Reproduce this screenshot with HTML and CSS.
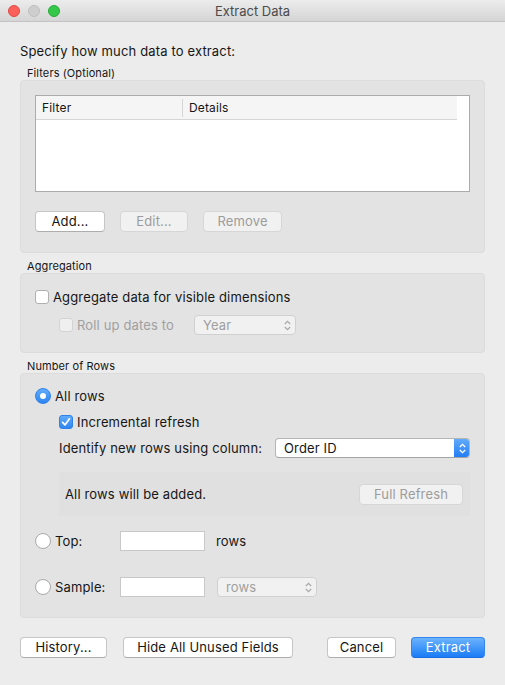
FILE: index.html
```html
<!DOCTYPE html>
<html>
<head>
<meta charset="utf-8">
<title>Extract Data</title>
<link rel="stylesheet" href="styles.css">
</head>
<body>
<div class="window">
  <div class="titlebar">
    <div class="lights">
      <span class="light red"></span>
      <span class="light gray"></span>
      <span class="light green"></span>
    </div>
    <div class="title">Extract Data</div>
    <div></div>
  </div>

  <div class="content">
    <div class="heading">Specify how much data to extract:</div>

    <div class="group-label">Filters (Optional)</div>
    <div class="group filters">
      <div class="table">
        <div class="thead">
          <div class="th th-filter">Filter</div>
          <div class="col-sep"></div>
          <div class="th th-details">Details</div>
        </div>
      </div>
      <div class="btn-row">
        <button class="btn w-add">Add...</button>
        <button class="btn disabled w-edit">Edit...</button>
        <button class="btn disabled w-remove">Remove</button>
      </div>
    </div>

    <div class="group-label">Aggregation</div>
    <div class="group agg">
      <div class="row">
        <span class="check"></span>
        <span>Aggregate data for visible dimensions</span>
      </div>
      <div class="row indent gap8">
        <span class="check disabled"></span>
        <span class="muted rollup-label">Roll up dates to</span>
        <div class="select disabled w-year">
          <span>Year</span>
          <svg class="chev" width="7" height="11" viewBox="0 0 7 11"><path d="M0.8 4 L3.5 1.3 L6.2 4 M0.8 7 L3.5 9.7 L6.2 7" fill="none" stroke="#a8a8a8" stroke-width="1.2"/></svg>
        </div>
      </div>
    </div>

    <div class="group-label">Number of Rows</div>
    <div class="group rows-group">
      <div class="row">
        <span class="radio on"><span class="dot"></span></span>
        <span>All rows</span>
      </div>
      <div class="row indent gap6">
        <span class="check on">
          <svg width="12" height="12" viewBox="0 0 12 12"><path d="M2.6 6.4 L5 8.9 L9.4 2.8" fill="none" stroke="#fff" stroke-width="1.7" stroke-linecap="round" stroke-linejoin="round"/></svg>
        </span>
        <span>Incremental refresh</span>
      </div>
      <div class="row indent gap6">
        <span class="identify-label">Identify new rows using column:</span>
        <div class="select active">
          <span>Order ID</span>
          <span class="stepper">
            <svg width="7" height="11" viewBox="0 0 7 11"><path d="M0.8 4 L3.5 1.3 L6.2 4 M0.8 7 L3.5 9.7 L6.2 7" fill="none" stroke="#fff" stroke-width="1.3"/></svg>
          </span>
        </div>
      </div>
      <div class="panel">
        <span>All rows will be added.</span>
        <button class="btn disabled w-full">Full Refresh</button>
      </div>
      <div class="row gap15">
        <span class="radio"></span>
        <span class="opt-label">Top:</span>
        <span class="field"></span>
        <span class="after">rows</span>
      </div>
      <div class="row gap26">
        <span class="radio"></span>
        <span class="opt-label">Sample:</span>
        <span class="field"></span>
        <div class="select disabled w-rows">
          <span>rows</span>
          <svg class="chev" width="7" height="11" viewBox="0 0 7 11"><path d="M0.8 4 L3.5 1.3 L6.2 4 M0.8 7 L3.5 9.7 L6.2 7" fill="none" stroke="#a8a8a8" stroke-width="1.2"/></svg>
        </div>
      </div>
    </div>

    <div class="footer">
      <div class="btn-group left">
        <button class="btn w-history">History...</button>
        <button class="btn w-hide">Hide All Unused Fields</button>
      </div>
      <div class="btn-group right">
        <button class="btn w-cancel">Cancel</button>
        <button class="btn primary w-extract">Extract</button>
      </div>
    </div>
  </div>
</div>
</body>
</html>
```

FILE: styles.css
```css
html, body {
  margin: 0;
  padding: 0;
  background: #ececec;
}

body {
  font-family: Inter, "Liberation Sans", Arial, sans-serif;
  font-size: 13px;
  letter-spacing: 0.15px;
  color: #161616;
}

.window {
  width: 505px;
  height: 685px;
  background: #ececec;
  overflow: hidden;
}

/* Title bar */
.titlebar {
  height: 21px;
  border-bottom: 1px solid #c3c3c3;
  background: linear-gradient(#ececec, #d5d5d5);
  display: grid;
  grid-template-columns: 1fr auto 1fr;
  align-items: center;
  border-radius: 5px 5px 0 0;
}

.lights {
  display: flex;
  gap: 8px;
  padding-left: 8px;
}

.light {
  width: 12px;
  height: 12px;
  border-radius: 50%;
  box-sizing: border-box;
}

.red { background: #fc605b; border: 1px solid #df4b45; }
.gray { background: #cecece; border: 1px solid #bebebe; }
.green { background: #34c84a; border: 1px solid #28ab38; }

.title {
  color: #4b4b4b;
  font-size: 13px;
  letter-spacing: 0;
}

/* Content */
.content {
  padding: 21px 20px 0;
}

.heading {
  line-height: 16px;
}

.group-label {
  font-size: 11px;
  line-height: 14px;
  padding-left: 7px;
  margin-top: 6px;
  letter-spacing: 0.1px;
}

.heading + .group-label {
  margin-top: 7px;
}

.group {
  background: #e3e3e3;
  border: 1px solid #dcdcdc;
  border-radius: 4px;
}

/* Filters */
.filters {
  padding: 14px 14px 20px;
}

.table {
  height: 95px;
  background: #fff;
  border: 1px solid #ababab;
}

.thead {
  display: flex;
  align-items: center;
  height: 23px;
  margin-right: 12px;
  background: #f5f5f5;
  border-bottom: 1px solid #d6d6d6;
}

.th {
  padding-left: 6px;
  font-size: 12px;
}

.th-filter {
  width: 140px;
}

.col-sep {
  width: 1px;
  height: 18px;
  background: #d6d6d6;
}

.btn-row {
  display: flex;
  gap: 15px;
  margin-top: 19px;
}

/* Buttons */
.btn {
  height: 21px;
  box-sizing: border-box;
  padding: 0;
  border: 1px solid #c6c6c6;
  border-bottom-color: #adadad;
  border-radius: 4px;
  background: #fff;
  font: inherit;
  letter-spacing: inherit;
  color: #161616;
  line-height: 19px;
  text-align: center;
}

.btn.disabled {
  background: #f1f1f1;
  border-color: #d6d6d6;
  color: #9c9c9c;
}

.btn.primary {
  background: linear-gradient(#6bb3fd, #1b7cf6);
  border-color: #3585ee;
  border-bottom-color: #1b6ee0;
  color: #fff;
}

.w-add { width: 70px; }
.w-edit { width: 68px; }
.w-remove { width: 79px; }
.w-full { width: 104px; }
.w-history { width: 87px; }
.w-hide { width: 170px; }
.w-cancel { width: 69px; }
.w-extract { width: 74px; }

/* Rows */
.row {
  display: flex;
  align-items: center;
  height: 20px;
}

.indent { padding-left: 24px; }
.gap6 { margin-top: 6px; }
.gap8 { margin-top: 8px; }
.gap15 { margin-top: 15px; }
.gap26 { margin-top: 26px; }

.check {
  width: 14px;
  height: 14px;
  box-sizing: border-box;
  border: 1px solid #b0b0b0;
  border-radius: 3px;
  background: #fff;
  margin-right: 4px;
  display: flex;
  align-items: center;
  justify-content: center;
  flex: none;
}

.check.disabled {
  background: #efefef;
  border-color: #d3d3d3;
}

.check.on {
  background: linear-gradient(#5fabfb, #2f86f2);
  border-color: #2f82ea;
}

.radio {
  width: 16px;
  height: 16px;
  box-sizing: border-box;
  border: 1px solid #a9a9a9;
  border-radius: 50%;
  background: #fff;
  margin-right: 4px;
  display: flex;
  align-items: center;
  justify-content: center;
  flex: none;
}

.radio.on {
  background: linear-gradient(#62acfb, #2d85f2);
  border-color: #2f82ea;
}

.dot {
  width: 6px;
  height: 6px;
  border-radius: 50%;
  background: #fff;
}

.muted { color: #a0a0a0; }

.agg {
  padding: 13px 14px 17px;
}

.rollup-label {
  width: 117px;
}

.select {
  height: 20px;
  box-sizing: border-box;
  border: 1px solid #d0d0d0;
  border-radius: 4px;
  display: flex;
  align-items: center;
  justify-content: space-between;
  padding: 0 4px 0 8px;
}

.select.disabled {
  background: #f1f1f1;
  color: #9f9f9f;
}

.w-year { width: 102px; }
.w-rows { width: 100px; margin-left: 12px; }

.rows-group {
  padding: 12px 14px 20px;
}

.identify-label {
  width: 216px;
}

.select.active {
  flex: 1;
  background: #fff;
  border-color: #b5b5b5;
  border-bottom-color: #a4a4a4;
  padding: 0 0 0 8px;
  overflow: hidden;
}

.stepper {
  width: 16px;
  height: 20px;
  margin: -1px -1px -1px 0;
  background: linear-gradient(#65adfc, #1f7cf5);
  border-radius: 0 4px 4px 0;
  display: flex;
  align-items: center;
  justify-content: center;
}

.panel {
  margin: 14px 0 0 24px;
  height: 44px;
  background: #e0e0e0;
  display: flex;
  align-items: center;
  justify-content: space-between;
  padding: 0 7px 0 6px;
}

.opt-label {
  width: 65px;
}

.field {
  width: 85px;
  height: 20px;
  box-sizing: border-box;
  border: 1px solid #c8c8c8;
  background: #fff;
}

.after {
  margin-left: 11px;
}

/* Footer */
.footer {
  display: flex;
  justify-content: space-between;
  margin-top: 19px;
}

.btn-group {
  display: flex;
}

.btn-group.left { gap: 16px; }
.btn-group.right { gap: 15px; }
```
